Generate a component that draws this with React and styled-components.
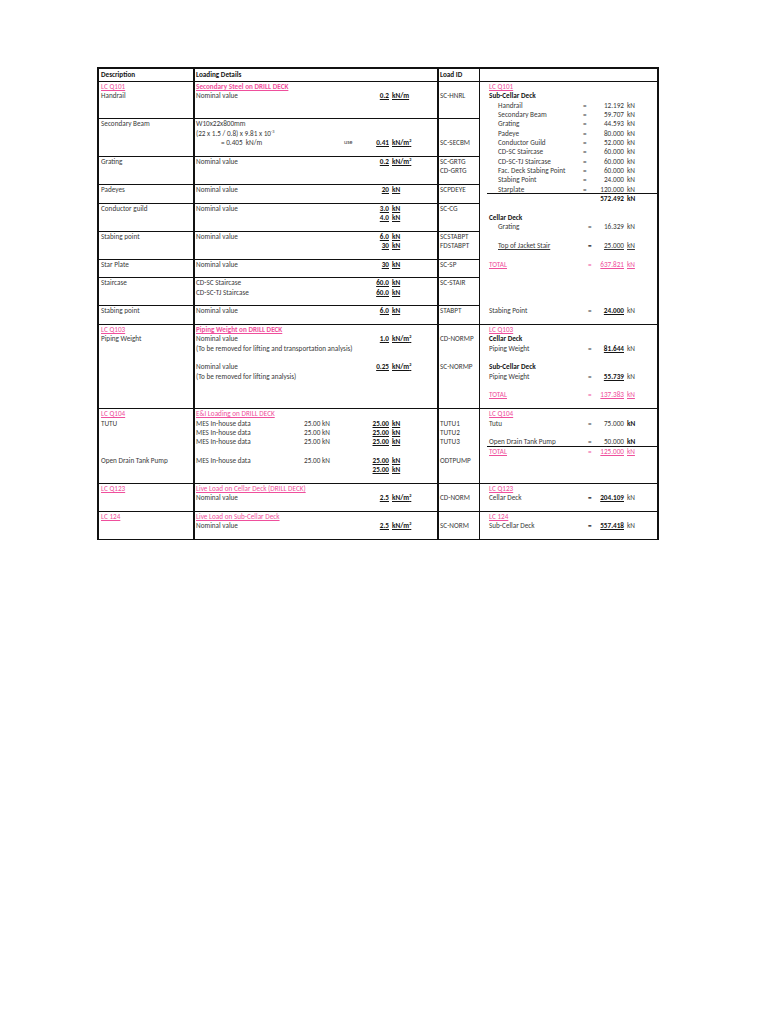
import styled, { createGlobalStyle } from "styled-components";

const LH = 9.35;
const INK = "#3a3a3a";
const DARK = "#151515";
const PINK = "#ef4f9c";

const GlobalStyle = createGlobalStyle`
  body {
    margin: 0;
    background: #fff;
    color: ${INK};
    font-family: Carlito, Lato, "Liberation Sans", sans-serif;
    font-size: 7.2px;
  }
`;

const Sheet = styled.div`
  display: grid;
  grid-template-columns: 96px 244px 41px 179px;
  grid-template-rows: ${(p) => p.$rows};
  width: max-content;
  margin: 67px 0 0 97px;
  border-top: 2px solid #111;
  border-left: 2px solid #111;
`;

const Cell = styled.div`
  box-sizing: border-box;
  min-width: 0;
  border-bottom: 1.5px solid #111;
  border-right: ${(p) => p.$br || 1}px solid #111;
  grid-row: ${(p) => (p.$span ? `span ${p.$span}` : "auto")};
  padding-left: ${(p) => p.$pl || 0}px;
`;

const HeadCell = styled(Cell)`
  font-weight: 700;
  color: ${DARK};
  line-height: 12px;
  padding-left: ${(p) => p.$pl || 1}px;
`;

const Line = styled.div`
  height: ${LH}px;
  line-height: ${LH}px;
  white-space: pre;
`;

const Txt = styled.span`
  font-weight: ${(p) => (p.$bold ? 700 : 400)};
  color: ${(p) => (p.$bold ? DARK : "inherit")};
`;

const U = styled(Txt)`
  text-decoration: underline;
  text-underline-offset: 1px;
  text-decoration-thickness: 0.7px;
  color: ${(p) => (p.$pink ? PINK : p.$bold ? DARK : "inherit")};
`;

const Sup = styled.sup`
  font-size: 4.3px;
  vertical-align: 2.8px;
  line-height: 0;
`;

/* middle column: text | small number | small unit | "use" | value | unit */
const DetailLine = styled.div`
  display: grid;
  grid-template-columns: 108px 18px 21px 16px 30px 1fr;
  height: ${LH}px;
  line-height: ${LH}px;
  white-space: pre;
`;

const DetailText = styled.span`
  padding-left: ${(p) => (p.$indent ? 25 : 0)}px;
`;

const Use = styled.span`
  font-size: 6px;
  padding-left: 1px;
`;

const Val = styled.span`
  text-align: right;
`;

const Unit = styled.span`
  padding-left: 3px;
`;

/* right column: label | = | number | unit */
const SumLine = styled.div`
  box-sizing: border-box;
  display: grid;
  grid-template-columns: 94px 16px 25px 1fr;
  margin-left: 7px;
  padding-left: 2px;
  height: ${LH}px;
  line-height: ${LH}px;
  white-space: pre;
  color: ${(p) => (p.$pink ? PINK : "inherit")};
  border-bottom: ${(p) => (p.$rule ? "1.2px solid #111" : "none")};
`;

const Label = styled.span`
  padding-left: ${(p) => (p.$indent ? 9 : 0)}px;
`;

const Eq = styled(Txt)`
  padding-left: ${(p) => (p.$shift ? 5 : 0)}px;
`;

const Num = styled.span`
  text-align: right;
`;

const m2 = (
  <>
    kN/m<Sup>2</Sup>
  </>
);

const rows = [
  {
    n: 4,
    desc: [{ t: "LC Q101", pink: true }, "Handrail"],
    mid: [
      { t: "Secondary Steel on DRILL DECK", title: true, bold: true },
      { t: "Nominal value", val: "0.2", unit: "kN/m" },
    ],
    ids: ["", "SC-HNRL"],
  },
  {
    n: 4,
    desc: ["Secondary Beam"],
    mid: [
      { t: "W10x22x800mm" },
      {
        t: (
          <>
            (22 x 1.5 / 0.8) x 9.81 x 10<Sup>-3</Sup>
          </>
        ),
      },
      { t: "= 0.405  kN/m", indent: true, use: "use", val: "0.41", unit: m2 },
    ],
    ids: ["", "", "SC-SECBM"],
  },
  {
    n: 3,
    desc: ["Grating"],
    mid: [{ t: "Nominal value", val: "0.2", unit: m2 }],
    ids: ["SC-GRTG", "CD-GRTG"],
  },
  {
    n: 2,
    desc: ["Padeyes"],
    mid: [{ t: "Nominal value", val: "20", unit: "kN" }],
    ids: ["SCPDEYE"],
  },
  {
    n: 3,
    desc: ["Conductor guild"],
    mid: [
      { t: "Nominal value", val: "3.0", unit: "kN" },
      { val: "4.0", unit: "kN" },
    ],
    ids: ["SC-CG"],
  },
  {
    n: 3,
    desc: ["Stabing point"],
    mid: [
      { t: "Nominal value", val: "6.0", unit: "kN" },
      { val: "30", unit: "kN" },
    ],
    ids: ["SCSTABPT", "FDSTABPT"],
  },
  {
    n: 2,
    desc: ["Star Plate"],
    mid: [{ t: "Nominal value", val: "30", unit: "kN" }],
    ids: ["SC-SP"],
  },
  {
    n: 3,
    desc: ["Staircase"],
    mid: [
      { t: "CD-SC Staircase", val: "60.0", unit: "kN" },
      { t: "CD-SC-TJ Staircase", val: "60.0", unit: "kN" },
    ],
    ids: ["SC-STAIR"],
  },
  {
    n: 2,
    desc: ["Stabing point"],
    mid: [{ t: "Nominal value", val: "6.0", unit: "kN" }],
    ids: ["STABPT"],
  },
  {
    n: 9,
    desc: [{ t: "LC Q103", pink: true }, "Piping Weight"],
    mid: [
      { t: "Piping Weight on DRILL DECK", title: true, bold: true },
      { t: "Nominal value", val: "1.0", unit: m2 },
      { t: "(To be removed for lifting and transportation analysis)" },
      {},
      { t: "Nominal value", val: "0.25", unit: m2 },
      { t: "(To be removed for lifting analysis)" },
    ],
    ids: ["", "CD-NORMP", "", "", "SC-NORMP"],
    sum: [
      { label: "LC Q103", pink: true, u: true },
      { label: "Cellar Deck", bold: true },
      { label: "Piping Weight", eq: true, shift: true, num: "81.644", numU: true, numBold: true, unit: "kN" },
      {},
      { label: "Sub-Cellar Deck", bold: true },
      { label: "Piping Weight", eq: true, shift: true, num: "55.739", numU: true, numBold: true, unit: "kN" },
      {},
      { label: "TOTAL", pink: true, u: true, eq: true, shift: true, num: "137.383", numU: true, unit: "kN", unitU: true },
    ],
  },
  {
    n: 8,
    desc: [{ t: "LC Q104", pink: true }, "TUTU", "", "", "", "Open Drain Tank Pump"],
    mid: [
      { t: "E&I Loading on DRILL DECK", title: true },
      { t: "MES In-house data", mnum: "25.00", munit: "kN", val: "25.00", unit: "kN" },
      { t: "MES In-house data", mnum: "25.00", munit: "kN", val: "25.00", unit: "kN" },
      { t: "MES In-house data", mnum: "25.00", munit: "kN", val: "25.00", unit: "kN" },
      {},
      { t: "MES In-house data", mnum: "25.00", munit: "kN", val: "25.00", unit: "kN" },
      { val: "25.00", unit: "kN" },
    ],
    ids: ["", "TUTU1", "TUTU2", "TUTU3", "", "ODTPUMP"],
    sum: [
      { label: "LC Q104", pink: true, u: true },
      { label: "Tutu", eq: true, shift: true, num: "75.000", unit: "kN", unitBold: true },
      {},
      { label: "Open Drain Tank Pump", eq: true, shift: true, num: "50.000", unit: "kN", unitBold: true, rule: true },
      { label: "TOTAL", pink: true, u: true, eq: true, shift: true, num: "125.000", numU: true, unit: "kN", unitU: true },
    ],
  },
  {
    n: 3,
    desc: [{ t: "LC Q123", pink: true }],
    mid: [
      { t: "Live Load on Cellar Deck (DRILL DECK)", title: true },
      { t: "Nominal value", val: "2.5", unit: m2 },
    ],
    ids: ["", "CD-NORM"],
    sum: [
      { label: "LC Q123", pink: true, u: true },
      { label: "Cellar Deck", eq: true, shift: true, eqBold: true, num: "204.109", numU: true, numBold: true, unit: "kN" },
    ],
  },
  {
    n: 3,
    desc: [{ t: "LC 124", pink: true }],
    mid: [
      { t: "Live Load on Sub-Cellar Deck", title: true },
      { t: "Nominal value", val: "2.5", unit: m2 },
    ],
    ids: ["", "SC-NORM"],
    sum: [
      { label: "LC 124", pink: true, u: true },
      { label: "Sub-Cellar Deck", eq: true, shift: true, eqBold: true, num: "557.418", numU: true, numBold: true, unit: "kN" },
    ],
  },
];

const sub = (label, num) => ({ label, indent: true, eq: true, num, unit: "kN" });

const firstSummary = [
  { label: "LC Q101", pink: true, u: true },
  { label: "Sub-Cellar Deck", bold: true },
  sub("Handrail", "12.192"),
  sub("Secondary Beam", "59.707"),
  sub("Grating", "44.593"),
  sub("Padeye", "80.000"),
  sub("Conductor Guild", "52.000"),
  sub("CD-SC Staircase", "60.000"),
  sub("CD-SC-TJ Staircase", "60.000"),
  sub("Fac. Deck Stabing Point", "60.000"),
  sub("Stabing Point", "24.000"),
  { ...sub("Starplate", "120.000"), rule: true },
  { num: "572.492", numBold: true, unit: "kN", unitBold: true },
  {},
  { label: "Cellar Deck", bold: true },
  { label: "Grating", indent: true, eq: true, shift: true, num: "16.329", unit: "kN" },
  {},
  { label: "Top of Jacket Stair", indent: true, u: true, eq: true, shift: true, eqBold: true, num: "25.000", numU: true, unit: "kN", unitU: true },
  {},
  { label: "TOTAL", pink: true, u: true, eq: true, shift: true, num: "637.821", numU: true, unit: "kN", unitU: true },
  {},
  {},
  {},
  {},
  { label: "Stabing Point", eq: true, shift: true, num: "24.000", numU: true, numBold: true, unit: "kN" },
];

function DescLines({ lines }) {
  return lines.map((l, i) =>
    typeof l === "string" ? (
      <Line key={i}>{l}</Line>
    ) : (
      <Line key={i}>
        <U $pink>{l.t}</U>
      </Line>
    )
  );
}

function DetailLines({ lines }) {
  return lines.map((l, i) => (
    <DetailLine key={i}>
      <DetailText $indent={l.indent}>
        {l.title ? (
          <U $pink $bold={l.bold}>
            {l.t}
          </U>
        ) : (
          l.t
        )}
      </DetailText>
      <span>{l.mnum}</span>
      <span>{l.munit}</span>
      <Use>{l.use}</Use>
      <Val>{l.val && <U $bold>{l.val}</U>}</Val>
      <Unit>{l.unit && <U $bold>{l.unit}</U>}</Unit>
    </DetailLine>
  ));
}

function Part({ text, under, bold }) {
  if (!text) return null;
  return under ? <U $bold={bold}>{text}</U> : <Txt $bold={bold}>{text}</Txt>;
}

function SummaryLines({ lines }) {
  return lines.map((l, i) => (
    <SumLine key={i} $pink={l.pink} $rule={l.rule}>
      <Label $indent={l.indent}>
        <Part text={l.label} under={l.u} bold={l.bold} />
      </Label>
      <Eq $shift={l.shift} $bold={l.eqBold}>
        {l.eq ? "=" : ""}
      </Eq>
      <Num>
        <Part text={l.num} under={l.numU} bold={l.numBold} />
      </Num>
      <Unit>
        <Part text={l.unit} under={l.unitU} bold={l.unitBold} />
      </Unit>
    </SumLine>
  ));
}

function RowCells({ row, first }) {
  return (
    <>
      <Cell $br={2} $pl={2}>
        <DescLines lines={row.desc} />
      </Cell>
      <Cell $br={2} $pl={1}>
        <DetailLines lines={row.mid} />
      </Cell>
      <Cell $pl={1}>
        {row.ids.map((id, i) => (
          <Line key={i}>{id}</Line>
        ))}
      </Cell>
      {first && (
        <Cell $br={2} $span={9}>
          <SummaryLines lines={firstSummary} />
        </Cell>
      )}
      {row.sum && (
        <Cell $br={2}>
          <SummaryLines lines={row.sum} />
        </Cell>
      )}
    </>
  );
}

export default function App() {
  const template = ["13px", ...rows.map((r) => `${(r.n * LH).toFixed(2)}px`)].join(" ");

  return (
    <>
      <GlobalStyle />
      <Sheet $rows={template}>
        <HeadCell $br={2} $pl={2}>
          Description
        </HeadCell>
        <HeadCell $br={2}>Loading Details</HeadCell>
        <HeadCell>Load ID</HeadCell>
        <HeadCell $br={2} />
        {rows.map((r, idx) => (
          <RowCells key={idx} row={r} first={idx === 0} />
        ))}
      </Sheet>
    </>
  );
}
